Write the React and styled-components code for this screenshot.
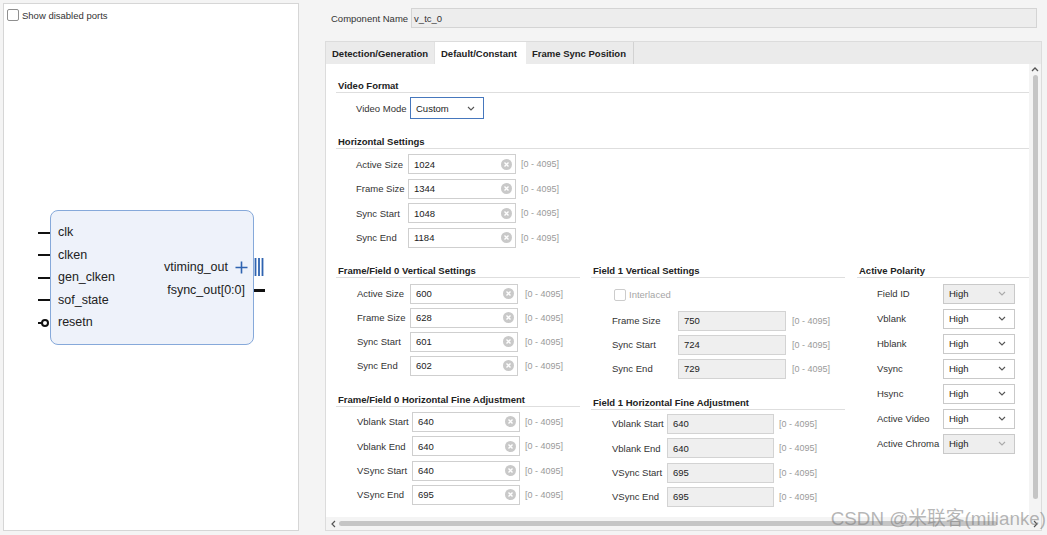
import React from "react";
import styled, { createGlobalStyle } from "styled-components";

const Global = createGlobalStyle`
  html, body { margin: 0; padding: 0; }
  body {
    background: #f4f4f4;
    font-family: "Liberation Sans", Arial, sans-serif;
    color: #222;
    width: 1047px;
    height: 535px;
    overflow: hidden;
  }
`;

const Page = styled.div`
  display: flex;
  width: 1047px;
  height: 535px;
  box-sizing: border-box;
  padding: 3px 5px 4px 3px;
  position: relative;
`;

/* ---------- left panel ---------- */
const LeftPanel = styled.div`
  width: 296px;
  flex: none;
  background: #fff;
  border: 1px solid #d6d6d6;
  box-sizing: border-box;
  display: flex;
  flex-direction: column;
`;

const CheckRow = styled.label`
  display: flex;
  align-items: center;
  gap: 3px;
  padding: 5px 0 0 3px;
  font-size: 9.5px;
  color: #333;
  opacity: ${(p) => (p.$disabled ? 0.45 : 1)};
`;

const CheckBox = styled.span`
  width: 10px;
  height: 10px;
  border: 1px solid #8f8f8f;
  border-radius: 2px;
  background: #fff;
  flex: none;
`;

const Canvas = styled.div`
  flex: 1;
  display: flex;
  justify-content: center;
  padding-top: 189px;
  padding-left: 2px;
`;

const Block = styled.div`
  width: 204px;
  height: 135px;
  box-sizing: border-box;
  border: 1px solid #86a9da;
  border-radius: 8px;
  background: #eef2fa;
  display: flex;
  justify-content: space-between;
  align-items: flex-start;
  padding: 10px 0 0 7px;
  font-size: 12.5px;
  color: #222;
`;

const PortCol = styled.div`
  display: flex;
  flex-direction: column;
`;

const InPort = styled.div`
  position: relative;
  height: 22.5px;
  line-height: 22.5px;
  &::before {
    content: "";
    position: absolute;
    left: -20px;
    top: 10.5px;
    width: 12px;
    height: 2px;
    background: #111;
  }
`;

const InvPort = styled(InPort)`
  &::before { width: 4px; }
  &::after {
    content: "";
    position: absolute;
    left: -17px;
    top: 8px;
    width: 4px;
    height: 4px;
    border: 2px solid #111;
    border-radius: 50%;
    background: #fff;
  }
`;

const OutCol = styled.div`
  display: flex;
  flex-direction: column;
  align-self: center;
  align-items: flex-end;
  margin-top: -8px;
`;

const OutPort = styled.div`
  position: relative;
  height: 23px;
  line-height: 23px;
  display: flex;
  align-items: center;
  gap: 7px;
  padding-right: ${(p) => p.$pr}px;
`;

const OutStub = styled.span`
  position: absolute;
  right: -12px;
  top: 10px;
  width: 11px;
  height: 3px;
  background: #111;
`;

const BusMark = styled.svg`
  position: absolute;
  right: -11px;
  top: 2px;
`;

/* ---------- right area ---------- */
const RightArea = styled.div`
  flex: 1;
  display: flex;
  flex-direction: column;
  margin-left: 26px;
  padding-top: 5px;
  min-width: 0;
`;

const NameRow = styled.div`
  display: flex;
  align-items: center;
  gap: 3px;
  padding-left: 6px;
  font-size: 9.5px;
  color: #333;
`;

const NameInput = styled.div`
  flex: 1;
  height: 20px;
  box-sizing: border-box;
  margin-right: 5px;
  border: 1px solid #d4d4d4;
  background: #ededed;
  display: flex;
  align-items: center;
  padding-left: 2px;
  font-size: 9.5px;
`;

const TabBar = styled.div`
  margin-top: 13px;
  height: 23px;
  display: flex;
  background: #ebebeb;
  border-top: 1px solid #dcdcdc;
  border-left: 1px solid #dcdcdc;
  border-right: 1px solid #dcdcdc;
  box-sizing: border-box;
`;

const Tab = styled.div`
  width: ${(p) => p.$w}px;
  box-sizing: border-box;
  display: flex;
  align-items: center;
  padding-left: 6px;
  font-size: 9.5px;
  font-weight: bold;
  color: #222;
  background: ${(p) => (p.$active ? "#fff" : "transparent")};
  border-left: ${(p) => (p.$active ? "1px solid #e2e2e2" : "none")};
  border-right: ${(p) => (p.$last ? "1px solid #d2d2d2" : "none")};
`;

const Content = styled.div`
  flex: 1;
  background: #fff;
  border: 1px solid #dcdcdc;
  border-top: none;
  display: grid;
  grid-template-columns: 1fr 12px;
  grid-template-rows: 1fr 13px;
  position: relative;
  min-height: 0;
`;

const Viewport = styled.div`
  padding: 16px 0 0 10px;
  overflow: hidden;
  display: flex;
  flex-direction: column;
`;

const VScroll = styled.div`
  background: #f4f4f4;
  display: flex;
  flex-direction: column;
  align-items: center;
  padding-top: 3px;
`;

const VThumb = styled.div`
  width: 5px;
  flex: 1;
  margin: 3px 0 18px;
  background: #c5c5c5;
  border-radius: 3px;
`;

const HScroll = styled.div`
  background: #f4f4f4;
  display: flex;
  align-items: center;
  padding-left: 5px;
  gap: 3px;
`;

const HThumb = styled.div`
  height: 5px;
  width: 658px;
  background: #c5c5c5;
  border-radius: 3px;
`;

const Corner = styled.div`
  background: #f4f4f4;
  display: flex;
  align-items: center;
  justify-content: center;
`;

const Section = styled.div`
  display: flex;
  flex-direction: column;
  margin-top: ${(p) => p.$mt || 0}px;
`;

const Header = styled.div`
  font-size: 9.5px;
  font-weight: bold;
  line-height: 12px;
  color: #222;
  padding-left: 2px;
  border-bottom: 1px solid #dedede;
`;

const Rows = styled.div`
  display: flex;
  flex-direction: column;
  gap: ${(p) => p.$gap}px;
  margin-top: ${(p) => p.$mt}px;
`;

const Row = styled.div`
  display: flex;
  align-items: center;
  height: ${(p) => p.$h || 20}px;
  padding-left: ${(p) => p.$indent}px;
`;

const Label = styled.span`
  width: ${(p) => p.$w}px;
  flex: none;
  font-size: 9.5px;
  color: #333;
`;

const InputBox = styled.div`
  width: ${(p) => p.$w || 108}px;
  height: 20px;
  box-sizing: border-box;
  border: 1px solid ${(p) => (p.$disabled ? "#d3d3d3" : "#cfcfcf")};
  background: ${(p) => (p.$disabled ? "#efefef" : "#fff")};
  display: flex;
  align-items: center;
  justify-content: space-between;
  padding: 0 3px 0 5px;
  font-size: 9.5px;
  color: #222;
`;

const Range = styled.span`
  margin-left: ${(p) => p.$ml || 5}px;
  font-size: 9px;
  color: #9a9a9a;
`;

const SelectBox = styled.div`
  width: ${(p) => p.$w}px;
  height: ${(p) => p.$h || 20}px;
  box-sizing: border-box;
  border: ${(p) => (p.$focus ? "1.5px solid #4677bd" : "1px solid #c9c9c9")};
  background: ${(p) => (p.$disabled ? "#eeeeee" : "#fff")};
  display: flex;
  align-items: center;
  justify-content: space-between;
  padding: 0 8px 0 5px;
  font-size: 9.5px;
  color: #222;
`;

const Columns = styled.div`
  display: grid;
  grid-template-columns: 244px 254px 173px;
  column-gap: 11px;
  margin-top: 17px;
  & > div:nth-child(3) { margin-left: 1px; }
`;

const Watermark = styled.div`
  position: absolute;
  right: 1px;
  bottom: 5px;
  font-family: "Liberation Sans", "Noto Sans CJK SC", sans-serif;
  font-size: 18.8px;
  color: rgba(120, 120, 120, 0.55);
  pointer-events: none;
`;

/* ---------- icons ---------- */
const ClearIcon = () => (
  <svg width="11" height="11" viewBox="0 0 11 11">
    <circle cx="5.5" cy="5.5" r="5.5" fill="#c9c9c9" />
    <path d="M3.5 3.5 L7.5 7.5 M7.5 3.5 L3.5 7.5" stroke="#fff" strokeWidth="1.4" />
  </svg>
);

const Chevron = ({ color = "#555" }) => (
  <svg width="8" height="5" viewBox="0 0 8 5">
    <path d="M1 1 L4 4 L7 1" fill="none" stroke={color} strokeWidth="1.1" />
  </svg>
);

const ChevronUp = () => (
  <svg width="8" height="5" viewBox="0 0 8 5">
    <path d="M1 4 L4 1 L7 4" fill="none" stroke="#555" strokeWidth="1.3" />
  </svg>
);

const ChevronLeft = () => (
  <svg width="5" height="8" viewBox="0 0 5 8">
    <path d="M4 1 L1 4 L4 7" fill="none" stroke="#555" strokeWidth="1.2" />
  </svg>
);

const ChevronRight = () => (
  <svg width="5" height="8" viewBox="0 0 5 8">
    <path d="M1 1 L4 4 L1 7" fill="none" stroke="#555" strokeWidth="1.2" />
  </svg>
);

const PlusIcon = () => (
  <svg width="13" height="13" viewBox="0 0 13 13">
    <path d="M6.5 0.5 V12.5 M0.5 6.5 H12.5" stroke="#2f63b0" strokeWidth="1.6" />
  </svg>
);

/* ---------- building blocks ---------- */
const Field = ({ label, value, disabled, indent, labelW, w, ml }) => (
  <Row $indent={indent}>
    <Label $w={labelW}>{label}</Label>
    <InputBox $disabled={disabled} $w={w}>
      <span>{value}</span>
      {!disabled && <ClearIcon />}
    </InputBox>
    <Range $ml={ml}>[0 - 4095]</Range>
  </Row>
);

const Polarity = ({ label, disabled }) => (
  <Row $indent={20}>
    <Label $w={66}>{label}</Label>
    <SelectBox $w={72} $disabled={disabled}>
      <span>High</span>
      <Chevron color={disabled ? "#aaa" : "#555"} />
    </SelectBox>
  </Row>
);

const horiz = [
  ["Active Size", "1024"],
  ["Frame Size", "1344"],
  ["Sync Start", "1048"],
  ["Sync End", "1184"],
];
const vert0 = [
  ["Active Size", "600"],
  ["Frame Size", "628"],
  ["Sync Start", "601"],
  ["Sync End", "602"],
];
const fine0 = [
  ["Vblank Start", "640"],
  ["Vblank End", "640"],
  ["VSync Start", "640"],
  ["VSync End", "695"],
];
const vert1 = [
  ["Frame Size", "750"],
  ["Sync Start", "724"],
  ["Sync End", "729"],
];
const fine1 = [
  ["Vblank Start", "640"],
  ["Vblank End", "640"],
  ["VSync Start", "695"],
  ["VSync End", "695"],
];
const polarity = [
  ["Field ID", true],
  ["Vblank", false],
  ["Hblank", false],
  ["Vsync", false],
  ["Hsync", false],
  ["Active Video", false],
  ["Active Chroma", true],
];

export default function App() {
  return (
    <>
      <Global />
      <Page>
        <LeftPanel>
          <CheckRow>
            <CheckBox />
            Show disabled ports
          </CheckRow>
          <Canvas>
            <Block>
              <PortCol>
                <InPort>clk</InPort>
                <InPort>clken</InPort>
                <InPort>gen_clken</InPort>
                <InPort>sof_state</InPort>
                <InvPort>resetn</InvPort>
              </PortCol>
              <OutCol>
                <OutPort $pr={5}>
                  vtiming_out
                  <PlusIcon />
                  <BusMark width="10" height="18" viewBox="0 0 10 18">
                    <path d="M1.5 0 V18 M5 0 V18 M8.5 0 V18" stroke="#2f63b0" strokeWidth="1.8" />
                  </BusMark>
                </OutPort>
                <OutPort $pr={8}>
                  fsync_out[0:0]
                  <OutStub />
                </OutPort>
              </OutCol>
            </Block>
          </Canvas>
        </LeftPanel>

        <RightArea>
          <NameRow>
            Component Name
            <NameInput>v_tc_0</NameInput>
          </NameRow>

          <TabBar>
            <Tab $w={108}>Detection/Generation</Tab>
            <Tab $w={92} $active>Default/Constant</Tab>
            <Tab $w={108} $last>Frame Sync Position</Tab>
          </TabBar>

          <Content>
            <Viewport>
              <Section>
                <Header>Video Format</Header>
                <Rows $gap={0} $mt={4}>
                  <Row $indent={20} $h={22}>
                    <Label $w={54}>Video Mode</Label>
                    <SelectBox $w={74} $h={22} $focus>
                      <span>Custom</span>
                      <Chevron />
                    </SelectBox>
                  </Row>
                </Rows>
              </Section>

              <Section $mt={17}>
                <Header>Horizontal Settings</Header>
                <Rows $gap={4.67} $mt={5}>
                  {horiz.map(([l, v]) => (
                    <Field key={l} label={l} value={v} indent={20} labelW={52} />
                  ))}
                </Rows>
              </Section>

              <Columns>
                <div>
                  <Section>
                    <Header>Frame/Field 0 Vertical Settings</Header>
                    <Rows $gap={4} $mt={6}>
                      {vert0.map(([l, v]) => (
                        <Field key={l} label={l} value={v} indent={21} labelW={53} ml={7} />
                      ))}
                    </Rows>
                  </Section>
                  <Section $mt={18}>
                    <Header>Frame/Field 0 Horizontal Fine Adjustment</Header>
                    <Rows $gap={4.33} $mt={5}>
                      {fine0.map(([l, v]) => (
                        <Field key={l} label={l} value={v} indent={21} labelW={55} ml={5} />
                      ))}
                    </Rows>
                  </Section>
                </div>

                <div>
                  <Section>
                    <Header>Field 1 Vertical Settings</Header>
                    <Rows $gap={9} $mt={10}>
                      <CheckRow as="div" $disabled style={{ padding: "0 0 0 23px", height: 14 }}>
                        <CheckBox />
                        Interlaced
                      </CheckRow>
                      <Rows $gap={4} $mt={0}>
                        {vert1.map(([l, v]) => (
                          <Field key={l} label={l} value={v} indent={21} labelW={66} disabled ml={6} />
                        ))}
                      </Rows>
                    </Rows>
                  </Section>
                  <Section $mt={18}>
                    <Header>Field 1 Horizontal Fine Adjustment</Header>
                    <Rows $gap={4.33} $mt={4}>
                      {fine1.map(([l, v]) => (
                        <Field key={l} label={l} value={v} indent={21} labelW={55} w={107} disabled ml={5} />
                      ))}
                    </Rows>
                  </Section>
                </div>

                <div>
                  <Section>
                    <Header>Active Polarity</Header>
                    <Rows $gap={5} $mt={6}>
                      {polarity.map(([l, d]) => (
                        <Polarity key={l} label={l} disabled={d} />
                      ))}
                    </Rows>
                  </Section>
                </div>
              </Columns>
            </Viewport>

            <VScroll>
              <ChevronUp />
              <VThumb />
            </VScroll>
            <HScroll>
              <ChevronLeft />
              <HThumb />
            </HScroll>
            <Corner>
              <ChevronRight />
            </Corner>
          </Content>
        </RightArea>
        <Watermark>CSDN @米联客(milianke)</Watermark>
      </Page>
    </>
  );
}
